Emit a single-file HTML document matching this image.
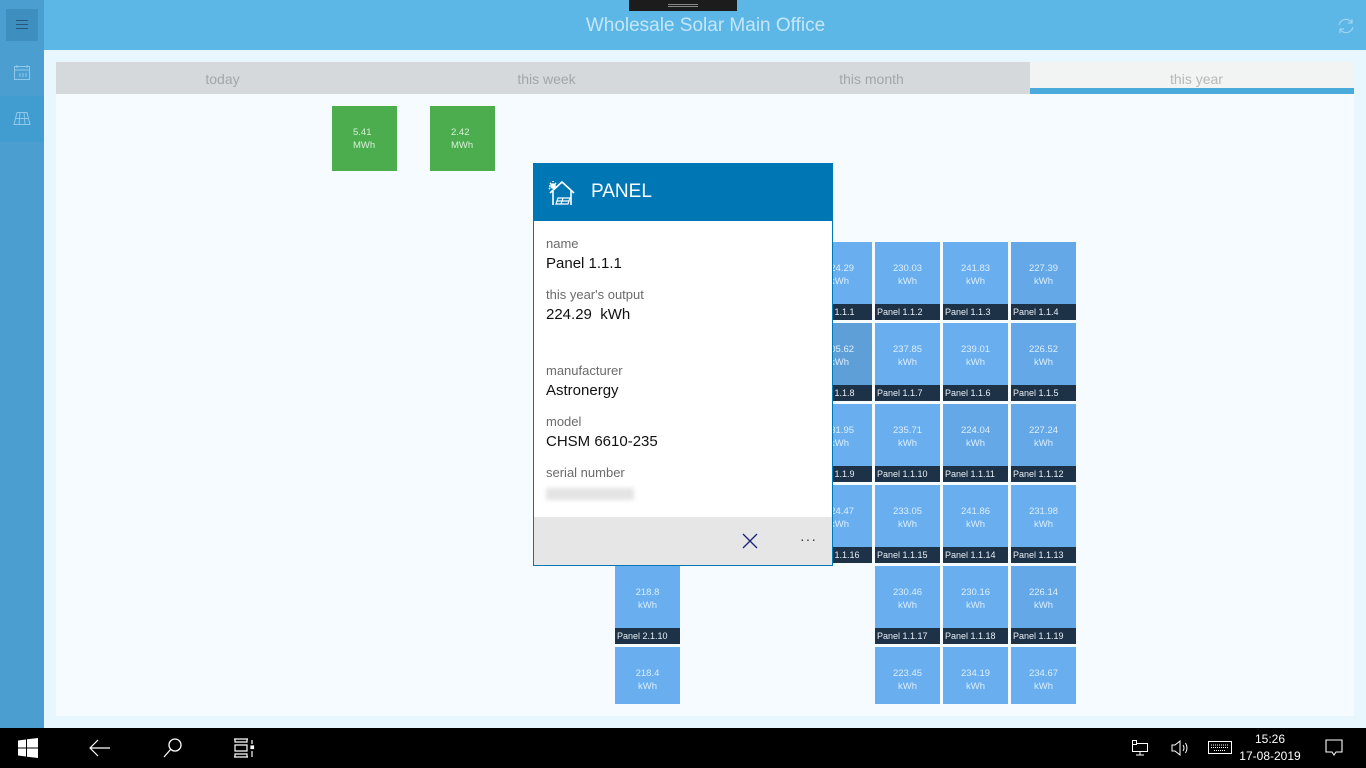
<!DOCTYPE html>
<html style="width:1366px;height:768px;overflow:hidden"><head><meta charset="utf-8"><style>
*{margin:0;padding:0;box-sizing:border-box}
body{width:1366px;height:768px;overflow:hidden;background:#e8f6fd;font-family:"Segoe UI","Liberation Sans",sans-serif;position:relative}
.abs{position:absolute}
.tile{position:absolute;width:65px;height:78px;background:#69aeef;color:#dbeefe;font-size:9.5px;text-align:center}
.tile .v{position:absolute;top:20px;left:0;right:0;line-height:13px}
.tile .l{position:absolute;bottom:0;left:0;right:0;height:16px;background:#1e3247;color:#e6eef5;text-align:left;padding-left:2px;line-height:16px;font-size:9px}
.tab{position:absolute;top:62px;height:32px;line-height:34px;text-align:center;color:#a3a6a8;font-size:14px}
.lab{color:#6b6b6b;font-size:13px}
.val{color:#111;font-size:15px}
</style></head><body>
<div class="abs" style="left:0;top:0;width:1366px;height:50px;background:#5db7e6"></div>
<div class="abs" style="left:629px;top:0;width:108px;height:11px;background:#1c1c1c"></div>
<div class="abs" style="left:668px;top:4px;width:30px;height:1px;background:#888"></div>
<div class="abs" style="left:668px;top:6px;width:30px;height:1px;background:#888"></div>
<div class="abs" style="left:0;top:15px;width:1411px;text-align:center;color:#c4e6f8;font-size:19px;font-weight:300">Wholesale Solar Main Office</div>
<svg class="abs" style="left:1337px;top:17px" width="18" height="18" viewBox="0 0 18 18" fill="none" stroke="#9fd3f0" stroke-width="1.2"><path d="M2 8A7 7 0 0 1 15 6M16 10A7 7 0 0 1 3 12M15 2v4h-4M3 16v-4h4"/></svg>
<div class="abs" style="left:0;top:0;width:44px;height:728px;background:#4a9fd0"></div>
<div class="abs" style="left:0;top:96px;width:44px;height:46px;background:#419ccf"></div>
<div class="abs" style="left:6px;top:9px;width:32px;height:32px;background:#3e8ec0"></div>
<div class="abs" style="left:16px;top:20px;width:12px;height:1px;background:#25577a;box-shadow:0 4px 0 #25577a,0 8px 0 #25577a"></div>
<svg class="abs" style="left:13px;top:64px" width="18" height="17" viewBox="0 0 18 17" fill="none" stroke="#8fc8ea" stroke-width="1"><rect x="1.5" y="2.5" width="15" height="13"/><path d="M1.5 6h15M4 1v3M14 1v3M7 9v4M10 9v4M13 9v4"/></svg>
<svg class="abs" style="left:13px;top:111px" width="18" height="15" viewBox="0 0 18 15" fill="none" stroke="#8fc8ea" stroke-width="1"><path d="M4 1.5h10l3 12H1zM2.5 7.5h13M7 1.5l-1 12M11 1.5l1 12"/></svg>
<div class="abs" style="left:56px;top:62px;width:1298px;height:654px;background:#f5fbfe"></div>
<div class="abs" style="left:56px;top:62px;width:974px;height:32px;background:#d5d9dc"></div>
<div class="abs" style="left:1030px;top:62px;width:324px;height:26px;background:#f2f3f3"></div>
<div class="abs" style="left:1030px;top:88px;width:324px;height:6px;background:#4aaadc"></div>
<div class="tab" style="left:56px;width:333px">today</div>
<div class="tab" style="left:380px;width:333px">this week</div>
<div class="tab" style="left:705px;width:333px">this month</div>
<div class="tab" style="left:1030px;width:333px;color:#b5b7b8">this year</div>
<div class="abs" style="left:332px;top:106px;width:65px;height:65px;background:#4cad4f;color:#d8efd8;font-size:9.5px;line-height:13px;padding:20px 0 0 21px">5.41<br>MWh</div>
<div class="abs" style="left:430px;top:106px;width:65px;height:65px;background:#4cad4f;color:#d8efd8;font-size:9.5px;line-height:13px;padding:20px 0 0 21px">2.42<br>MWh</div>

<div class="tile" style="left:807px;top:242px"><div class="v">224.29<br>kWh</div><div class="l">Panel 1.1.1</div></div>
<div class="tile" style="left:875px;top:242px"><div class="v">230.03<br>kWh</div><div class="l">Panel 1.1.2</div></div>
<div class="tile" style="left:943px;top:242px"><div class="v">241.83<br>kWh</div><div class="l">Panel 1.1.3</div></div>
<div class="tile" style="left:1011px;top:242px;background:#64a8e8"><div class="v">227.39<br>kWh</div><div class="l">Panel 1.1.4</div></div>
<div class="tile" style="left:807px;top:323px;background:#5f9fd8"><div class="v">205.62<br>kWh</div><div class="l">Panel 1.1.8</div></div>
<div class="tile" style="left:875px;top:323px"><div class="v">237.85<br>kWh</div><div class="l">Panel 1.1.7</div></div>
<div class="tile" style="left:943px;top:323px"><div class="v">239.01<br>kWh</div><div class="l">Panel 1.1.6</div></div>
<div class="tile" style="left:1011px;top:323px;background:#64a8e8"><div class="v">226.52<br>kWh</div><div class="l">Panel 1.1.5</div></div>
<div class="tile" style="left:807px;top:404px"><div class="v">231.95<br>kWh</div><div class="l">Panel 1.1.9</div></div>
<div class="tile" style="left:875px;top:404px"><div class="v">235.71<br>kWh</div><div class="l">Panel 1.1.10</div></div>
<div class="tile" style="left:943px;top:404px;background:#64a8e8"><div class="v">224.04<br>kWh</div><div class="l">Panel 1.1.11</div></div>
<div class="tile" style="left:1011px;top:404px;background:#64a8e8"><div class="v">227.24<br>kWh</div><div class="l">Panel 1.1.12</div></div>
<div class="tile" style="left:807px;top:485px"><div class="v">224.47<br>kWh</div><div class="l">Panel 1.1.16</div></div>
<div class="tile" style="left:875px;top:485px"><div class="v">233.05<br>kWh</div><div class="l">Panel 1.1.15</div></div>
<div class="tile" style="left:943px;top:485px"><div class="v">241.86<br>kWh</div><div class="l">Panel 1.1.14</div></div>
<div class="tile" style="left:1011px;top:485px"><div class="v">231.98<br>kWh</div><div class="l">Panel 1.1.13</div></div>
<div class="tile" style="left:875px;top:566px"><div class="v">230.46<br>kWh</div><div class="l">Panel 1.1.17</div></div>
<div class="tile" style="left:943px;top:566px"><div class="v">230.16<br>kWh</div><div class="l">Panel 1.1.18</div></div>
<div class="tile" style="left:1011px;top:566px;background:#64a8e8"><div class="v">226.14<br>kWh</div><div class="l">Panel 1.1.19</div></div>
<div class="tile" style="left:875px;top:647px;height:57px"><div class="v">223.45<br>kWh</div></div>
<div class="tile" style="left:943px;top:647px;height:57px"><div class="v">234.19<br>kWh</div></div>
<div class="tile" style="left:1011px;top:647px;height:57px"><div class="v">234.67<br>kWh</div></div>
<div class="tile" style="left:615px;top:566px"><div class="v">218.8<br>kWh</div><div class="l">Panel 2.1.10</div></div>
<div class="tile" style="left:615px;top:647px;height:57px"><div class="v">218.4<br>kWh</div></div>

<div class="abs" style="left:533px;top:163px;width:300px;height:403px;border:1px solid #0077b5;background:#fff">
 <div style="height:57px;background:#0077b5;position:relative">
  <svg class="abs" style="left:12px;top:14px" width="32" height="30" viewBox="0 0 32 30" fill="none" stroke="#fff" stroke-width="1.6"><path d="M4 15L16 4l12 11M7 13v14M25 13v14"/><circle cx="7" cy="8" r="2" fill="#fff"/><path d="M7 3v1M3 8h1M4 5l1 1M10 5l-1 1M3 11l1-1"/><path d="M12 20h12l-2 6H10zM11 23h12M17 20l-2 6" stroke-width="1.2"/></svg>
  <div class="abs" style="left:57px;top:17px;color:#fff;font-size:19px">PANEL</div>
 </div>
 <div style="padding:14px 0 0 12px;line-height:1">
  <div class="lab" style="margin-top:2px">name</div>
  <div class="val" style="margin-top:6px">Panel 1.1.1</div>
  <div class="lab" style="margin-top:17px">this year's output</div>
  <div class="val" style="margin-top:6px">224.29&nbsp; kWh</div>
  <div class="lab" style="margin-top:42px">manufacturer</div>
  <div class="val" style="margin-top:6px">Astronergy</div>
  <div class="lab" style="margin-top:17px">model</div>
  <div class="val" style="margin-top:6px">CHSM 6610-235</div>
  <div class="lab" style="margin-top:17px">serial number</div>
  <div style="margin-top:9px;width:88px;height:12px;background:#e4e4e4;filter:blur(2px)"></div>
 </div>
 <div class="abs" style="left:0;top:353px;width:298px;height:48px;background:#e6e6e6">
  <svg class="abs" style="left:208px;top:16px" width="16" height="16" viewBox="0 0 16 16" stroke="#1a237e" stroke-width="1.3"><path d="M1 1l14 14M15 1L1 15"/></svg>
  <div class="abs" style="left:266px;top:14px;font-size:14px;color:#333;letter-spacing:1px">···</div>
 </div>
</div>

<div class="abs" style="left:0;top:728px;width:1366px;height:40px;background:#000"></div>
<svg class="abs" style="left:18px;top:738px" width="20" height="20" viewBox="0 0 20 20" fill="#fff"><path d="M0 2.5l8-1v8H0zM9 1.3L20 0v9.5H9zM0 10.5h8v8l-8-1zM9 10.5h11V20L9 18.7z"/></svg>
<svg class="abs" style="left:89px;top:739px" width="22" height="18" viewBox="0 0 22 18" fill="none" stroke="#fff" stroke-width="1.2"><path d="M21 9H2M9 1L1 9l8 8"/></svg>
<svg class="abs" style="left:162px;top:737px" width="22" height="22" viewBox="0 0 22 22" fill="none" stroke="#fff" stroke-width="1.3"><circle cx="13" cy="8" r="6"/><path d="M9 12l-7 8"/></svg>
<svg class="abs" style="left:233px;top:738px" width="24" height="20" viewBox="0 0 24 20" fill="none" stroke="#fff" stroke-width="1.2"><path d="M1 1h14M1 19h14M2 1v3h12V1M2 19v-3h12v3M2 7h12v6H2zM19 2v4M19 13v6"/><rect x="18" y="8" width="2.5" height="2.5" fill="#fff"/></svg>
<svg class="abs" style="left:1131px;top:740px" width="18" height="16" viewBox="0 0 18 16" fill="none" stroke="#fff" stroke-width="1"><rect x="1.5" y="0.5" width="4" height="4"/><path d="M5.5 3.5h11v8h-15v-7M9 11.5v3M5 15h8"/></svg>
<svg class="abs" style="left:1171px;top:740px" width="20" height="16" viewBox="0 0 20 16" fill="none" stroke="#fff" stroke-width="1"><path d="M1 5h3l5-4v14l-5-4H1zM12 5q2 3 0 6M14.5 3q3 5 0 10"/></svg>
<svg class="abs" style="left:1208px;top:741px" width="24" height="13" viewBox="0 0 24 13" fill="none" stroke="#fff" stroke-width="1"><rect x="0.5" y="0.5" width="23" height="12"/><path d="M3 4h18M3 6.5h18M6 9.5h12" stroke-dasharray="1 1"/></svg>
<div class="abs" style="left:1230px;top:731px;width:80px;text-align:center;color:#fff;font-size:12px;line-height:17px;white-space:nowrap">15:26<br>17-08-2019</div>
<svg class="abs" style="left:1325px;top:739px" width="18" height="18" viewBox="0 0 18 18" fill="none" stroke="#fff" stroke-width="1.1"><path d="M1 1h16v12h-6l-2 3-2-3H1z"/></svg>
</body></html>
